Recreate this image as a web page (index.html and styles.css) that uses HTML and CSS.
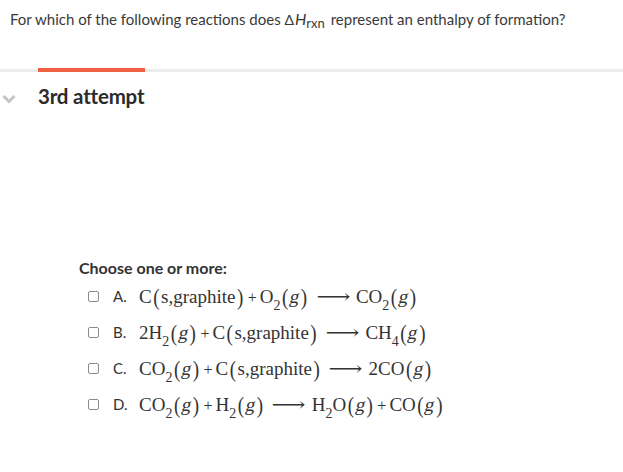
FILE: index.html
```html
<!DOCTYPE html>
<html>
<head>
<meta charset="utf-8">
<link rel="stylesheet" href="styles.css">
</head>
<body>
<div class="page">
  <p class="question">For which of the following reactions does <span class="delta">Δ</span><i class="hvar">H</i><sub class="rxn">rxn</sub> represent an enthalpy of formation?</p>
  <div class="tabs"><div class="tab-active"></div></div>
  <div class="attempt">
    <svg class="chev" width="14" height="10" viewBox="0 0 14 10"><path d="M1.5 2 L7 7.5 L12.5 2" fill="none" stroke="#c4c4c4" stroke-width="3"/></svg>
    <h2 class="attempt-title">3rd attempt</h2>
  </div>
  <div class="choices">
    <div class="choose">Choose one or more:</div>
    <ul class="options">
      <li class="opt"><span class="box"></span><span class="letter">A.</span>
        <span class="eq">C<span class="p">(</span>s,graphite<span class="p">)</span><span class="op">+</span>O<sub>2</sub><span class="p">(</span><span class="g">g</span><span class="p">)</span><span class="arrow">⟶</span>CO<sub>2</sub><span class="p">(</span><span class="g">g</span><span class="p">)</span></span></li>
      <li class="opt"><span class="box"></span><span class="letter">B.</span>
        <span class="eq">2H<sub>2</sub><span class="p">(</span><span class="g">g</span><span class="p">)</span><span class="op">+</span>C<span class="p">(</span>s,graphite<span class="p">)</span><span class="arrow">⟶</span>CH<sub>4</sub><span class="p">(</span><span class="g">g</span><span class="p">)</span></span></li>
      <li class="opt"><span class="box"></span><span class="letter">C.</span>
        <span class="eq">CO<sub>2</sub><span class="p">(</span><span class="g">g</span><span class="p">)</span><span class="op">+</span>C<span class="p">(</span>s,graphite<span class="p">)</span><span class="arrow">⟶</span>2CO<span class="p">(</span><span class="g">g</span><span class="p">)</span></span></li>
      <li class="opt"><span class="box"></span><span class="letter">D.</span>
        <span class="eq">CO<sub>2</sub><span class="p">(</span><span class="g">g</span><span class="p">)</span><span class="op">+</span>H<sub>2</sub><span class="p">(</span><span class="g">g</span><span class="p">)</span><span class="arrow">⟶</span>H<sub>2</sub>O<span class="p">(</span><span class="g">g</span><span class="p">)</span><span class="op">+</span>CO<span class="p">(</span><span class="g">g</span><span class="p">)</span></span></li>
    </ul>
  </div>
</div>
</body>
</html>
```

FILE: styles.css
```css
* { box-sizing: border-box; }
html, body { margin: 0; padding: 0; background: #fff; }
body { font-family: Lato, "Open Sans", sans-serif; color: #333; }
.page { width: 623px; height: 472px; }

.question {
  margin: 0;
  padding: 9px 0 0 10px;
  font-size: 15px;
  line-height: 19px;
  color: #3a3a3a;
}
.delta { font-size: 14px; margin-right: 1px; }
.hvar { font-size: 16px; }
.rxn { font-size: 13px; vertical-align: -3px; line-height: 0; margin-right: 2px; }

.tabs {
  margin-top: 39px;
  height: 4px;
  border-bottom: 3px solid #ebebeb;
  position: relative;
}
.tab-active {
  position: absolute;
  left: 38px;
  top: 0;
  width: 107px;
  height: 4px;
  background: #ee6041;
}

.attempt {
  display: flex;
  align-items: center;
  margin-top: 11px;
  height: 26px;
}
.chev { margin-left: 2px; margin-top: 5px; }
.attempt-title {
  margin: 0 0 0 22px;
  font-size: 20.5px;
  font-weight: 700;
  color: #2b2b2b;
  line-height: 26px;
  letter-spacing: -0.2px;
}

.choices { margin-top: 150px; padding-left: 79px; }
.choose {
  font-size: 16px;
  font-weight: 700;
  line-height: 18px;
  color: #333;
}
.options { list-style: none; margin: 1px 0 0 0; padding: 0 0 0 9px; }
.opt {
  display: flex;
  align-items: center;
  height: 36px;
}
.box {
  width: 11px;
  height: 11px;
  border: 1px solid #8a8a8a;
  border-radius: 2px;
  margin-right: 14px;
  flex: none;
}
.letter {
  font-size: 15px;
  width: 26px;
  flex: none;
}
.eq {
  font-family: "Liberation Serif", "DejaVu Serif", serif;
  font-size: 19px;
  color: #333;
  white-space: nowrap;
}
.eq sub { font-size: 14px; vertical-align: -7px; line-height: 0; }
.g { display: inline-block; transform: skewX(-12deg); }
.p { display: inline-block; transform: scaleY(1.25); margin: 0 1.5px; }
.op { margin: 0 3px; font-size: 16px; }
.arrow { display: inline-block; margin: 0 9px 0 11px; font-size: 19px; transform: scaleX(1.25); }
```
